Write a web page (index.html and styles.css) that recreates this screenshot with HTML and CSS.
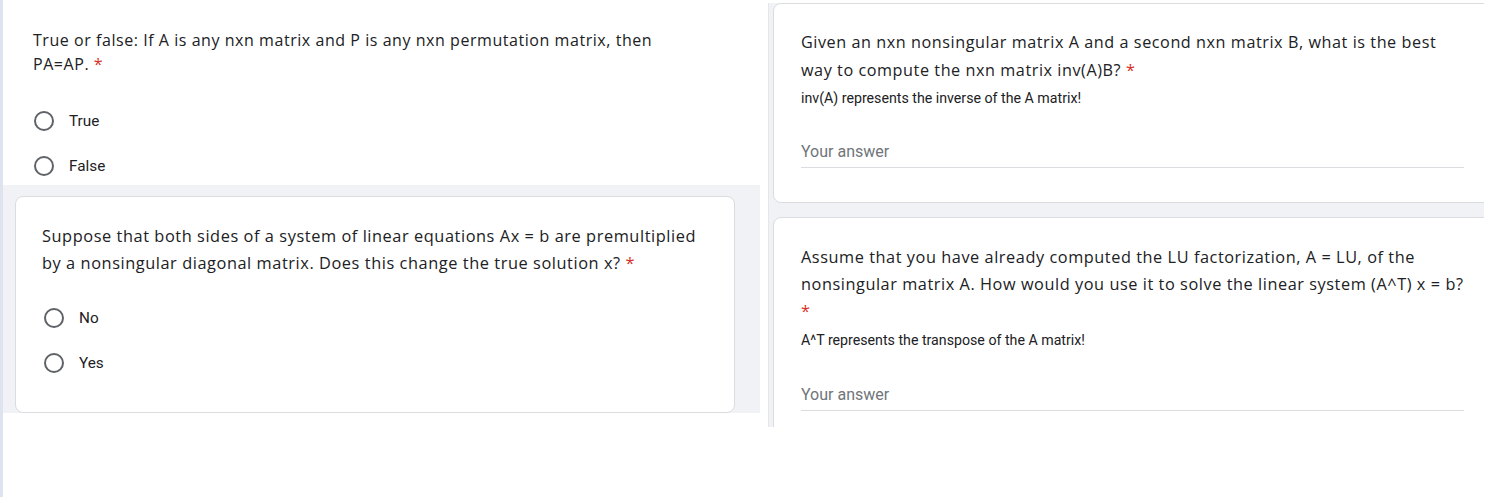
FILE: index.html
```html
<!DOCTYPE html>
<html lang="en">
<head>
<meta charset="utf-8">
<title>Quiz questions</title>
<link rel="stylesheet" href="styles.css">
</head>
<body>
<div class="page">
  <div class="edge"></div>
  <div class="left">
    <div class="top-piece">
      <section class="card card-a">
        <div class="q q-a">True or false: If A is any nxn matrix and P is any nxn permutation matrix, then<br>PA=AP. <span class="req">*</span></div>
        <div class="options options-a">
          <div class="opt"><span class="radio"></span><span class="opt-label">True</span></div>
          <div class="opt"><span class="radio"></span><span class="opt-label">False</span></div>
        </div>
      </section>
    </div>
    <div class="gray-piece">
      <section class="card card-b">
        <div class="q q-b">Suppose that both sides of a system of linear equations Ax = b are premultiplied<br>by a nonsingular diagonal matrix. Does this change the true solution x? <span class="req">*</span></div>
        <div class="options options-b">
          <div class="opt"><span class="radio"></span><span class="opt-label">No</span></div>
          <div class="opt"><span class="radio"></span><span class="opt-label">Yes</span></div>
        </div>
      </section>
    </div>
  </div>
  <div class="right">
    <section class="card card-c">
      <div class="q q-c">Given an nxn nonsingular matrix A and a second nxn matrix B, what is the best<br>way to compute the nxn matrix inv(A)B? <span class="req">*</span></div>
      <div class="desc desc-c">inv(A) represents the inverse of the A matrix!</div>
      <div class="answer answer-c">Your answer</div>
    </section>
    <section class="card card-d">
      <div class="q q-d">Assume that you have already computed the LU factorization, A = LU, of the<br>nonsingular matrix A. How would you use it to solve the linear system (A^T) x = b?<br><span class="req">*</span></div>
      <div class="desc desc-d">A^T represents the transpose of the A matrix!</div>
      <div class="answer answer-d">Your answer</div>
    </section>
  </div>
</div>
</body>
</html>
```

FILE: styles.css
```css
* { box-sizing: border-box; }

html, body {
  margin: 0;
  padding: 0;
  background: #ffffff;
  overflow: hidden;
}

body {
  width: 1492px;
  height: 497px;
  color: #202124;
  font-family: "Open Sans", "Liberation Sans", sans-serif;
}

.page {
  display: flex;
  align-items: flex-start;
  height: 497px;
}

.edge {
  width: 3px;
  height: 497px;
  background: #dde3ef;
  flex: none;
}

.left {
  width: 757px;
  flex: none;
  display: flex;
  flex-direction: column;
}

.top-piece {
  height: 185px;
  background: #ffffff;
}

.gray-piece {
  height: 228px;
  background: #f1f2f6;
  padding: 11px 0 0 12px;
}

.card {
  background: #ffffff;
  border: 1px solid #dadce0;
  border-radius: 8px;
}

.card-a {
  width: 720px;
  height: 188px;
  margin-top: -3px;
  border: none;
  border-radius: 0 8px 0 0;
  padding: 31px 0 0 30px;
}

.card-b {
  width: 720px;
  height: 217px;
  padding: 26px 0 0 26px;
}

.q {
  white-space: nowrap;
  letter-spacing: 0.0344em;
}

.q-a {
  font-size: 16px;
  line-height: 24px;
}

.q-b {
  font-size: 16.35px;
  line-height: 27px;
}

.q-c {
  font-size: 16.2px;
  line-height: 28px;
}

.q-d {
  font-size: 16.3px;
  line-height: 27px;
}

.req {
  color: #d93025;
}

.options {
  display: flex;
  flex-direction: column;
}

.options-a { margin-top: 22px; }
.options-b { margin-top: 18px; padding-left: 1px; }

.opt {
  height: 45px;
  display: flex;
  align-items: center;
  font-family: Roboto, "Liberation Sans", sans-serif;
  font-size: 15.3px;
}

.radio {
  width: 20px;
  height: 20px;
  border: 2px solid #5f6368;
  border-radius: 50%;
  margin-left: 1px;
  margin-right: 15px;
  flex: none;
}

.right {
  width: 716px;
  height: 424px;
  margin-top: 3px;
  margin-left: 8px;
  background: #f1f2f6;
  border-left: 1px solid #e4e6ea;
  padding-left: 4px;
  overflow: hidden;
  flex: none;
  display: flex;
  flex-direction: column;
  gap: 14px;
}

.card-c {
  width: 760px;
  height: 200px;
  flex: none;
  padding: 24px 0 0 27px;
}

.card-d {
  width: 760px;
  height: 260px;
  flex: none;
  padding: 26px 0 0 27px;
}

.desc {
  font-family: Roboto, "Liberation Sans", sans-serif;
  font-size: 14.2px;
  line-height: 20px;
  color: #202124;
}

.desc-c { margin-top: 4px; }
.desc-d { margin-top: 5px; }

.answer {
  width: 663px;
  font-family: Roboto, "Liberation Sans", sans-serif;
  font-size: 16px;
  line-height: 20px;
  color: #70757a;
  padding-bottom: 5px;
  border-bottom: 1px solid #dadce0;
}

.answer-c { margin-top: 34px; }
.answer-d { margin-top: 35px; }
```
